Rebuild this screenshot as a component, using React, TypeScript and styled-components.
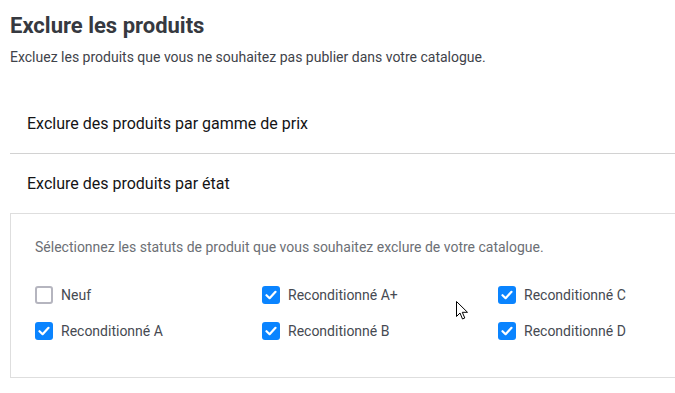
import React from "react";
import styled, { createGlobalStyle } from "styled-components";

const GlobalStyle = createGlobalStyle`
  html, body { margin: 0; padding: 0; background: #fff; overflow: hidden; }
  body { font-family: Roboto, "Noto Sans", Arial, sans-serif; -webkit-font-smoothing: antialiased; }
`;

const Page = styled.div`
  position: relative;
  width: 700px;
  padding: 12px 0 0 10px;
  box-sizing: border-box;
`;

const Title = styled.h1`
  margin: 0;
  font-size: 22px;
  line-height: 27px;
  font-weight: 700;
  color: #363940;
`;

const Subtitle = styled.p`
  margin: 10px 0 0;
  font-size: 14px;
  line-height: 16px;
  color: #3f434a;
`;

const Sections = styled.div`
  margin-top: 29px;
  display: flex;
  flex-direction: column;
`;

const SectionHeader = styled.div<{ $divider?: boolean }>`
  height: ${(p) => (p.$divider ? "60px" : "59px")};
  box-sizing: border-box;
  display: flex;
  align-items: center;
  padding-left: 17px;
  font-size: 16px;
  font-weight: 400;
  color: #141416;
  border-bottom: ${(p) => (p.$divider ? "1px solid #d2d2d2" : "none")};
`;

const Panel = styled.div`
  border: 1px solid #dedede;
  padding: 25px 24px 0;
  height: 165px;
  box-sizing: border-box;
`;

const Description = styled.p`
  margin: 0;
  font-size: 14px;
  line-height: 16px;
  color: #6c6f75;
`;

const Grid = styled.div`
  margin-top: 31px;
  display: grid;
  grid-template-columns: 227px 236px 1fr;
  row-gap: 18px;
`;

const Option = styled.label`
  display: flex;
  align-items: center;
  gap: 8px;
  height: 18px;
  font-size: 14px;
  color: #464a52;
  cursor: pointer;
`;

const Box = styled.span<{ $checked: boolean }>`
  width: 18px;
  height: 18px;
  box-sizing: border-box;
  border-radius: 3px;
  flex-shrink: 0;
  display: flex;
  align-items: center;
  justify-content: center;
  background: ${(p) => (p.$checked ? "#0a84ff" : "#fff")};
  border: ${(p) => (p.$checked ? "none" : "2px solid #b5b5bf")};
`;

const Cursor = styled.svg`
  position: absolute;
  left: 456px;
  top: 301px;
`;

const options: [string, boolean][] = [
  ["Neuf", false],
  ["Reconditionné A+", true],
  ["Reconditionné C", true],
  ["Reconditionné A", true],
  ["Reconditionné B", true],
  ["Reconditionné D", true],
];

export default function App() {
  return (
    <Page>
      <GlobalStyle />
      <Title>Exclure les produits</Title>
      <Subtitle>Excluez les produits que vous ne souhaitez pas publier dans votre catalogue.</Subtitle>
      <Sections>
        <SectionHeader $divider>Exclure des produits par gamme de prix</SectionHeader>
        <SectionHeader>Exclure des produits par état</SectionHeader>
        <Panel>
          <Description>
            Sélectionnez les statuts de produit que vous souhaitez exclure de votre catalogue.
          </Description>
          <Grid>
            {options.map(([label, checked]) => (
              <Option key={label}>
                <Box $checked={checked}>
                  {checked && (
                    <svg width="12" height="10" viewBox="0 0 12 10">
                      <path d="M1.5 5.2 L4.6 8.2 L10.5 1.8" fill="none" stroke="#fff" strokeWidth="2.2" strokeLinecap="round" strokeLinejoin="round" />
                    </svg>
                  )}
                </Box>
                {label}
              </Option>
            ))}
          </Grid>
        </Panel>
      </Sections>
      <Cursor width="13" height="20" viewBox="0 0 13 20">
        <path d="M0.5 0.5 L0.5 15.5 L4 12 L6.5 18 L8.8 17 L6.3 11.3 L11.5 11.3 Z" fill="#fff" stroke="#000" strokeWidth="1" strokeLinejoin="round" />
      </Cursor>
    </Page>
  );
}
